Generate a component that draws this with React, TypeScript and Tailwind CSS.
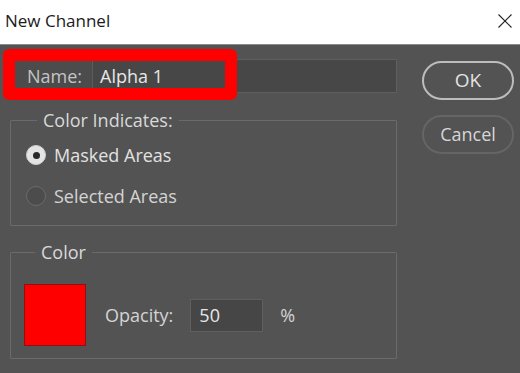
const FONT = "font-['Open_Sans','Noto_Sans',sans-serif]"

function Radio({ checked, label }: { checked?: boolean; label: string }) {
  return (
    <div className="flex items-center h-[24px]">
      <span
        className={
          checked
            ? 'w-[20px] h-[20px] rounded-full bg-[#e4e4e4] border border-[#cfcfcf] flex items-center justify-center'
            : 'w-[20px] h-[20px] rounded-full bg-[#4c4c4c] border border-[#6b6b6b]'
        }
      >
        {checked && <span className="w-[7px] h-[7px] rounded-full bg-[#2a2a2a]" />}
      </span>
      <span className={checked ? 'ml-[8px] text-[#e2e2e2]' : 'ml-[8px] text-[#d4d4d4]'}>{label}</span>
    </div>
  )
}

export default function App() {
  return (
    <div className={`w-[520px] h-[373px] overflow-hidden flex flex-col text-[18px] ${FONT}`}>
      {/* title bar */}
      <div className="h-[45px] shrink-0 bg-white border-b border-[#8a8a8a] flex items-center justify-between pl-[5px] pr-[8px]">
        <span className="text-[17px] text-[#1b1b1b] mb-[2px]">New Channel</span>
        <svg width="14" height="14" viewBox="0 0 14 14" className="mb-[2px]">
          <path d="M0.5 0.5L13.5 13.5M13.5 0.5L0.5 13.5" stroke="#222" strokeWidth="1.1" />
        </svg>
      </div>

      {/* body */}
      <div className="flex-1 bg-[#535353] flex relative">
        <div className="w-[387px] ml-[10px] pt-[14px]">
          {/* name field */}
          <div className="h-[34px] flex border border-[#5e5e5e] bg-[#474747]">
            <div className="w-[82px] bg-[#4c4c4c] border-r border-[#5c5c5c] flex items-center pl-[16px] text-[#c4c4c4]">
              Name:
            </div>
            <div className="flex-1 flex items-center pl-[7px] text-[#e8e8e8]">Alpha 1</div>
          </div>

          <fieldset className="mt-[15px] h-[118px] border border-[#6a6a6a] rounded-[1px] px-0">
            <legend className="ml-[26px] px-[6px] leading-[24px] text-[#d9d9d9]">Color Indicates:</legend>
            <div className="pl-[15px] pt-[11px] flex flex-col gap-[17px]">
              <Radio checked label="Masked Areas" />
              <Radio label="Selected Areas" />
            </div>
          </fieldset>

          <fieldset className="mt-[14px] h-[119px] border border-[#6a6a6a] rounded-[1px] px-0">
            <legend className="ml-[24px] px-[6px] leading-[24px] text-[#d9d9d9]">Color</legend>
            <div className="pl-[13px] pt-[20px] flex items-center">
              <div className="w-[62px] h-[62px] bg-[#ff0000] border border-[#8e1010]" />
              <span className="ml-[19px] text-[#d4d4d4]">Opacity:</span>
              <div className="ml-[17px] w-[73px] h-[33px] bg-[#464646] border border-[#5f5f5f] flex items-center pl-[8px] text-[#e6e6e6]">
                50
              </div>
              <span className="ml-[17px] text-[#d4d4d4]">%</span>
            </div>
          </fieldset>
        </div>

        {/* buttons */}
        <div className="ml-auto mr-[6px] pt-[16px] flex flex-col gap-[15px]">
          <button className="w-[92px] h-[39px] rounded-full border-2 border-[#bdbdbd] text-[19px] text-[#e2e2e2]">
            OK
          </button>
          <button className="w-[92px] h-[39px] rounded-full border-2 border-[#656565] text-[18px] text-[#d6d6d6]">
            Cancel
          </button>
        </div>

        {/* red highlight over the name field */}
        <div className="absolute left-[3px] top-[4px] w-[234px] h-[51px] border-[12px] border-[#ff0000] rounded-[6px]" />
      </div>
    </div>
  )
}
